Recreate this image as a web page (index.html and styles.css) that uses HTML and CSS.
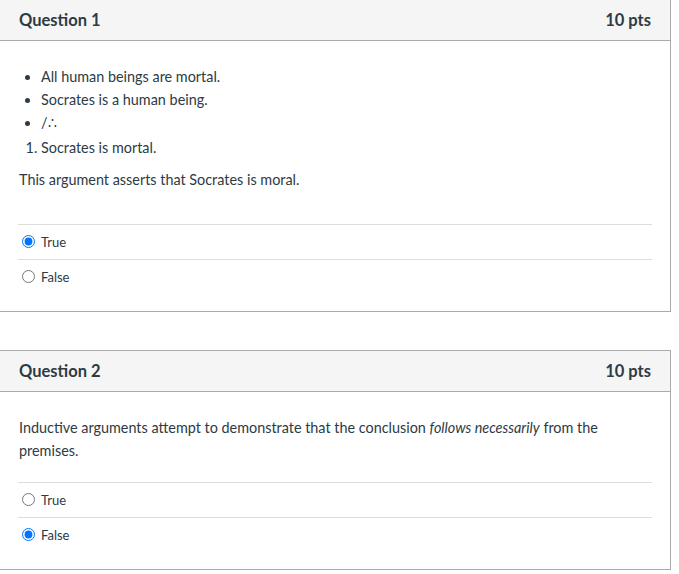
FILE: index.html
```html
<!DOCTYPE html>
<html lang="en">
<head>
    <meta charset="UTF-8">
    <meta name="viewport" content="width=device-width, initial-scale=1.0">
    <title>Quiz</title>
    <link rel="stylesheet" href="styles.css">
</head>
<body>
    <div class="quiz">
        <div class="question">
            <div class="question-header">
                <span class="question-name">Question 1</span>
                <span class="question-points">10 pts</span>
            </div>
            <div class="question-body">
                <ul>
                    <li>All human beings are mortal.</li>
                    <li>Socrates is a human being.</li>
                    <li>/∴</li>
                </ul>
                <ol>
                    <li>Socrates is mortal.</li>
                </ol>
                <p>This argument asserts that Socrates is moral.</p>
            </div>
            <div class="answers answers-wide">
                <label class="answer">
                    <input type="radio" name="q1" checked>
                    <span>True</span>
                </label>
                <label class="answer">
                    <input type="radio" name="q1">
                    <span>False</span>
                </label>
            </div>
        </div>

        <div class="question">
            <div class="question-header">
                <span class="question-name">Question 2</span>
                <span class="question-points">10 pts</span>
            </div>
            <div class="question-body">
                <p>Inductive arguments attempt to demonstrate that the conclusion <em>follows necessarily</em> from the premises.</p>
            </div>
            <div class="answers">
                <label class="answer">
                    <input type="radio" name="q2">
                    <span>True</span>
                </label>
                <label class="answer">
                    <input type="radio" name="q2" checked>
                    <span>False</span>
                </label>
            </div>
        </div>
    </div>
</body>
</html>
```

FILE: styles.css
```css
body {
    font-family: Lato, 'Noto Sans', sans-serif;
    color: #2d3b45;
    margin: 0;
    background: white;
}

.quiz {
    width: 672px;
    margin: -1px 0 0 -1px;
}

.question {
    border: 1px solid #aaaaaa;
}

.question + .question {
    margin-top: 38px;
}

.question-header {
    height: 40px;
    padding: 0 19px;
    background: #f5f5f5;
    border-bottom: 1px solid #aaaaaa;
    display: flex;
    align-items: center;
    justify-content: space-between;
    font-weight: bold;
    font-size: 16.5px;
}

.question-body {
    padding: 25px 19px 0;
    font-size: 14.4px;
    line-height: 22.75px;
}

.question-body ul,
.question-body ol {
    margin: 0;
    padding-left: 22px;
}

.question-body ol {
    margin-top: 3px;
}

.question-body p {
    margin: 9px 0 0;
    padding-right: 30px;
}

.question-body p:first-child {
    margin-top: 0;
}

.answers {
    margin: 20px 18px 0;
    padding-bottom: 17px;
}

.answers-wide {
    margin-top: 32px;
}

.answer {
    height: 34px;
    border-top: 1px solid #dddddd;
    display: flex;
    align-items: center;
    font-size: 13px;
}

.answer input {
    width: 13px;
    height: 13px;
    margin: 0 6px 1px 4px;
}
```
